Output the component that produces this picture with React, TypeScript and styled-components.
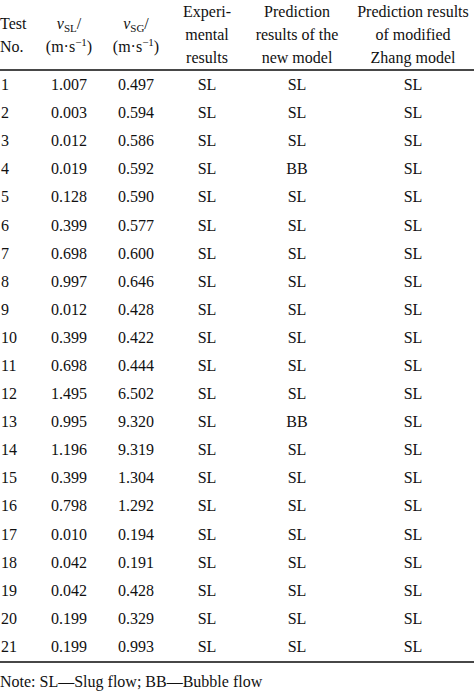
import * as React from 'react';
import styled, { createGlobalStyle } from 'styled-components';

const GlobalStyle = createGlobalStyle`
  html, body {
    margin: 0;
    padding: 0;
    background: #ffffff;
  }
  body {
    font-family: 'Liberation Serif', 'Times New Roman', serif;
    color: #111111;
  }
`;

const Page = styled.div`
  width: 474px;
`;

const Table = styled.table`
  width: 474px;
  border-collapse: collapse;
  table-layout: fixed;
  font-size: 16px;
  border-bottom: 2px solid #474747;
`;

const Head = styled.th<{ $align?: 'left' | 'center' }>`
  font-weight: normal;
  line-height: 23px;
  padding: 0;
  vertical-align: middle;
  text-align: ${(p) => p.$align || 'center'};
  border-bottom: 2px solid #474747;
  white-space: nowrap;
`;

const Cell = styled.td<{ $align?: 'left' | 'center' }>`
  height: 28.1px;
  padding: 0;
  line-height: 18px;
  vertical-align: middle;
  text-align: ${(p) => p.$align || 'center'};
  padding-left: ${(p) => (p.$align === 'left' ? '1px' : '0')};
  white-space: nowrap;
`;

const Var = styled.span`
  font-style: italic;
`;

const Sub = styled.span`
  font-size: 11px;
  vertical-align: -3px;
  line-height: 0;
`;

const Sup = styled.span`
  font-size: 11px;
  vertical-align: 6px;
  line-height: 0;
`;

const Note = styled.div`
  font-size: 16px;
  line-height: 18px;
  margin-top: 10px;
`;

type Row = [string, string, string, string, string, string];

const rows: Row[] = [
  ['1', '1.007', '0.497', 'SL', 'SL', 'SL'],
  ['2', '0.003', '0.594', 'SL', 'SL', 'SL'],
  ['3', '0.012', '0.586', 'SL', 'SL', 'SL'],
  ['4', '0.019', '0.592', 'SL', 'BB', 'SL'],
  ['5', '0.128', '0.590', 'SL', 'SL', 'SL'],
  ['6', '0.399', '0.577', 'SL', 'SL', 'SL'],
  ['7', '0.698', '0.600', 'SL', 'SL', 'SL'],
  ['8', '0.997', '0.646', 'SL', 'SL', 'SL'],
  ['9', '0.012', '0.428', 'SL', 'SL', 'SL'],
  ['10', '0.399', '0.422', 'SL', 'SL', 'SL'],
  ['11', '0.698', '0.444', 'SL', 'SL', 'SL'],
  ['12', '1.495', '6.502', 'SL', 'SL', 'SL'],
  ['13', '0.995', '9.320', 'SL', 'BB', 'SL'],
  ['14', '1.196', '9.319', 'SL', 'SL', 'SL'],
  ['15', '0.399', '1.304', 'SL', 'SL', 'SL'],
  ['16', '0.798', '1.292', 'SL', 'SL', 'SL'],
  ['17', '0.010', '0.194', 'SL', 'SL', 'SL'],
  ['18', '0.042', '0.191', 'SL', 'SL', 'SL'],
  ['19', '0.042', '0.428', 'SL', 'SL', 'SL'],
  ['20', '0.199', '0.329', 'SL', 'SL', 'SL'],
  ['21', '0.199', '0.993', 'SL', 'SL', 'SL'],
];

const Unit = () => (
  <>
    (m·s<Sup>−1</Sup>)
  </>
);

export default function App() {
  return (
    <Page>
      <GlobalStyle />
      <Table>
        <colgroup>
          <col style={{ width: 38 }} />
          <col style={{ width: 62 }} />
          <col style={{ width: 72 }} />
          <col style={{ width: 70 }} />
          <col style={{ width: 110 }} />
          <col style={{ width: 122 }} />
        </colgroup>
        <thead>
          <tr>
            <Head $align="left">
              Test
              <br />
              No.
            </Head>
            <Head>
              <Var>v</Var>
              <Sub>SL</Sub>/
              <br />
              <Unit />
            </Head>
            <Head>
              <Var>v</Var>
              <Sub>SG</Sub>/
              <br />
              <Unit />
            </Head>
            <Head>
              Experi-
              <br />
              mental
              <br />
              results
            </Head>
            <Head>
              Prediction
              <br />
              results of the
              <br />
              new model
            </Head>
            <Head>
              Prediction results
              <br />
              of modified
              <br />
              Zhang model
            </Head>
          </tr>
        </thead>
        <tbody>
          {rows.map((r) => (
            <tr key={r[0]}>
              <Cell $align="left">{r[0]}</Cell>
              <Cell>{r[1]}</Cell>
              <Cell>{r[2]}</Cell>
              <Cell>{r[3]}</Cell>
              <Cell>{r[4]}</Cell>
              <Cell>{r[5]}</Cell>
            </tr>
          ))}
        </tbody>
      </Table>
      <Note>Note: SL—Slug flow; BB—Bubble flow</Note>
    </Page>
  );
}
